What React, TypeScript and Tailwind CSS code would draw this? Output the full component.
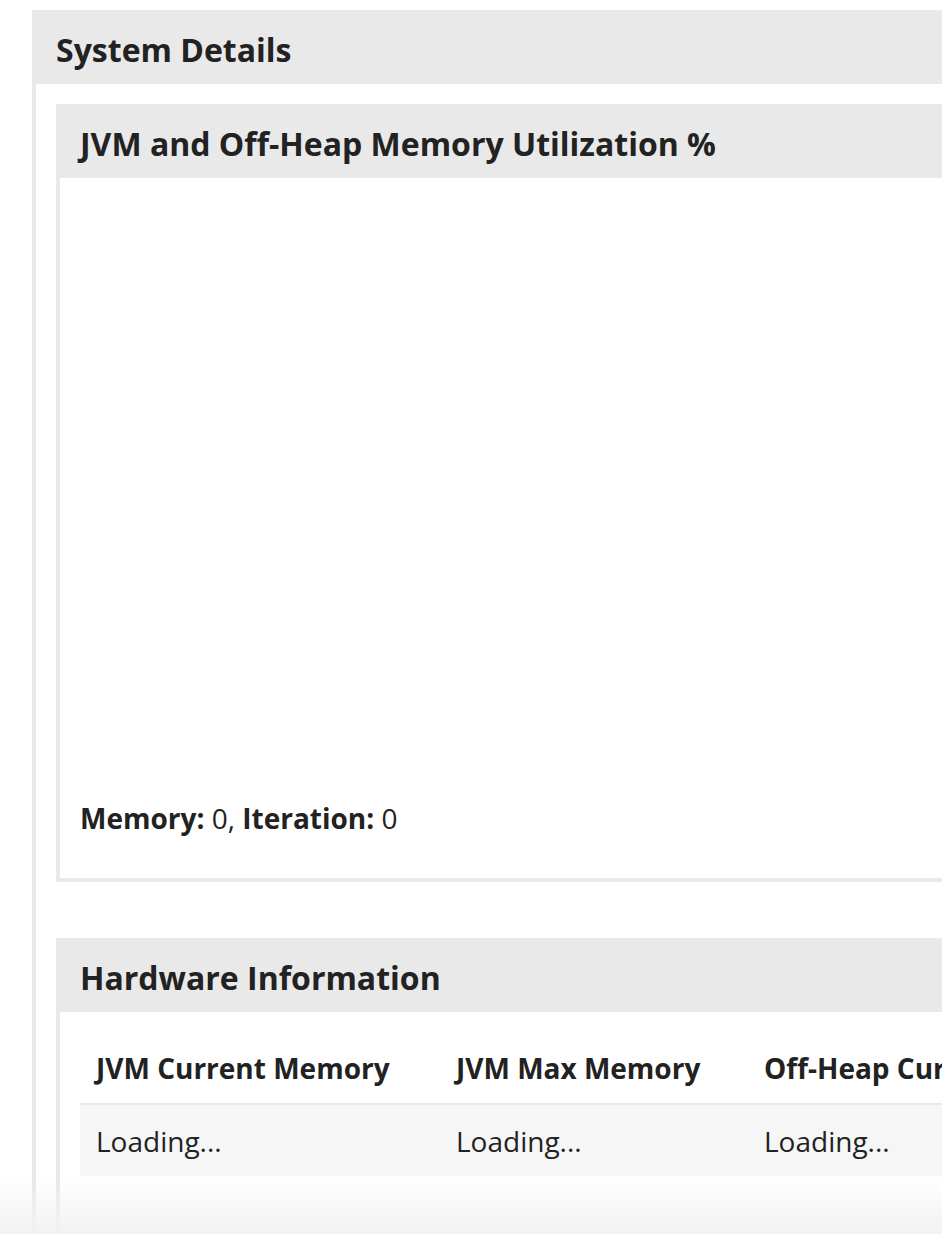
import React from "react";

export default function App() {
  return (
    <div className="relative w-[942px] h-[1234px] overflow-hidden bg-white text-[#222222] font-['Open_Sans',sans-serif]">
      <div className="pt-[10px] pl-[32px]">
        <div className="w-[1200px]">
          <div className="h-[74px] bg-[#e9e9e9] px-6 flex items-center">
            <h2 className="text-[32px] font-bold leading-none pt-[6px]">System Details</h2>
          </div>
          <div className="border-l-4 border-[#e9e9e9] pl-5 pt-5">
            <div>
              <div className="h-[74px] bg-[#e9e9e9] px-6 flex items-center">
                <h3 className="text-[32px] font-bold leading-none pt-[6px]">JVM and Off-Heap Memory Utilization %</h3>
              </div>
              <div className="h-[704px] border-l-4 border-b-4 border-[#e9e9e9] flex flex-col justify-end px-5 pb-[42px]">
                <p className="text-[28px] leading-[36px]">
                  <span className="font-bold">Memory:</span> 0, <span className="font-bold">Iteration:</span> 0
                </p>
              </div>
            </div>
            <div className="mt-[56px]">
              <div className="h-[74px] bg-[#e9e9e9] px-6 flex items-center">
                <h3 className="text-[32px] font-bold leading-none pt-[6px]">Hardware Information</h3>
              </div>
              <div className="border-l-4 border-[#e9e9e9] pl-5 pt-5 h-[400px]">
                <table className="border-collapse text-[28px] whitespace-nowrap">
                  <thead>
                    <tr className="h-[72px] border-b-2 border-[#e9e9e9]">
                      <th className="w-[360px] px-4 text-left font-bold">JVM Current Memory</th>
                      <th className="w-[308px] px-4 text-left font-bold">JVM Max Memory</th>
                      <th className="w-[420px] px-4 text-left font-bold">Off-Heap Current Memory</th>
                    </tr>
                  </thead>
                  <tbody>
                    <tr className="h-[72px] bg-[#f6f6f6]">
                      <td className="px-4">Loading...</td>
                      <td className="px-4">Loading...</td>
                      <td className="px-4">Loading...</td>
                    </tr>
                  </tbody>
                </table>
              </div>
            </div>
          </div>
        </div>
      </div>
      <div className="pointer-events-none absolute left-0 right-0 bottom-0 h-[56px] bg-gradient-to-b from-transparent to-[#f2f2f2]" />
    </div>
  );
}
